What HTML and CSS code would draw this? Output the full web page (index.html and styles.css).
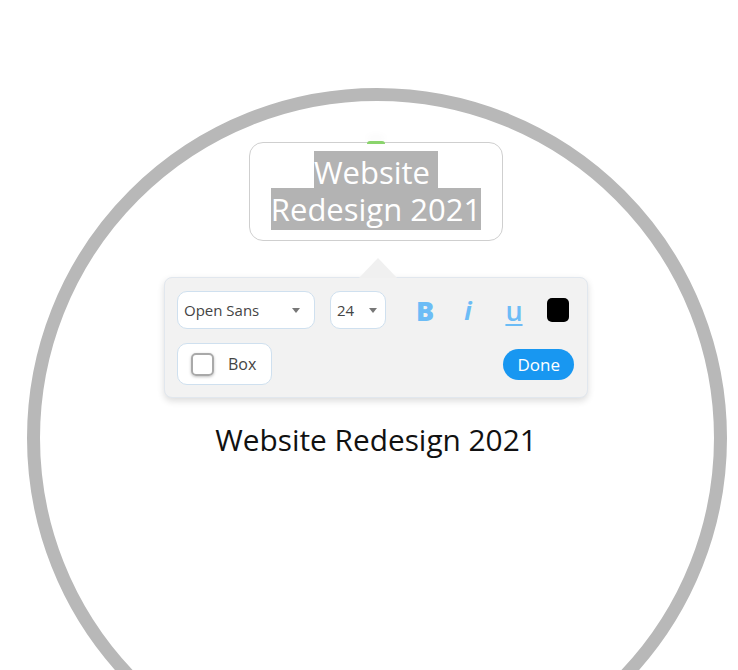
FILE: index.html
```html
<!DOCTYPE html>
<html lang="en">
<head>
    <meta charset="UTF-8">
    <title>Mind Map Editor</title>
    <link rel="stylesheet" href="styles.css">
</head>
<body>
    <div class="stage">
        <div class="ring"></div>

        <div class="content">
            <div class="node-edit">
                <span class="node-dot"></span>
                <p class="node-text"><span class="sel">Website&nbsp;<br>Redesign 2021</span></p>
            </div>

            <div class="toolbar">
                <div class="tool-row">
                    <div class="select font-select">
                        <span>Open Sans</span>
                        <span class="caret"></span>
                    </div>
                    <div class="select size-select">
                        <span>24</span>
                        <span class="caret"></span>
                    </div>
                    <div class="format">
                        <button class="fmt fmt-bold">B</button>
                        <button class="fmt fmt-italic">i</button>
                        <button class="fmt fmt-under">u</button>
                        <span class="swatch"></span>
                    </div>
                </div>
                <div class="tool-row">
                    <label class="box-toggle">
                        <span class="check"></span>
                        <span>Box</span>
                    </label>
                    <button class="done">Done</button>
                </div>
            </div>

            <h1 class="title">Website Redesign 2021</h1>
        </div>
    </div>
</body>
</html>
```

FILE: styles.css
```css
body {
    margin: 0;
    background: white;
    font-family: 'Open Sans', sans-serif;
    color: #333;
}
.stage {
    position: relative;
    height: 670px;
    overflow: hidden;
}
.ring {
    position: absolute;
    left: 27px;
    top: 88px;
    width: 700px;
    height: 700px;
    box-sizing: border-box;
    border: 13px solid #b8b8b8;
    border-radius: 50%;
}
.content {
    position: relative;
    display: flex;
    flex-direction: column;
    align-items: center;
    padding: 142px 0 0 14px;
}

/* node being edited */
.node-edit {
    position: relative;
    width: 254px;
    height: 99px;
    box-sizing: border-box;
    border: 1px solid #cfcfcf;
    border-radius: 14px;
    background: white;
    text-align: center;
}
.node-dot {
    position: absolute;
    left: 117px;
    top: -2px;
    width: 18px;
    height: 3px;
    border-radius: 9px 9px 0 0;
    background: #8ad46c;
    box-shadow: 0 -4px 8px rgba(0, 0, 0, 0.06);
}
.node-text {
    margin: 0;
    padding-top: 11px;
    font-size: 31px;
    line-height: 37px;
    color: white;
}
.sel {background: #b3b3b3;}

/* formatting toolbar */
.toolbar {
    position: relative;
    margin-top: 36px;
    width: 424px;
    box-sizing: border-box;
    padding: 13px 13px 12px 12px;
    background: #f2f2f2;
    border: 1px solid #e1e7ee;
    border-radius: 8px;
    box-shadow: 0 3px 7px rgba(0, 0, 0, 0.14);
}
.toolbar::before {
    content: "";
    position: absolute;
    left: 194px;
    top: -20px;
    border: 19px solid transparent;
    border-top: 0;
    border-bottom: 20px solid #f0f0f0;
}
.tool-row {
    display: flex;
    align-items: center;
}
.tool-row + .tool-row {
    margin-top: 14px;
    justify-content: space-between;
}
.select {
    display: flex;
    align-items: center;
    justify-content: space-between;
    height: 38px;
    box-sizing: border-box;
    padding: 0 8px 0 6px;
    background: white;
    border: 1px solid #cfe0ef;
    border-radius: 10px;
    font-size: 15px;
    color: #444;
}
.font-select {width: 138px; padding-right: 14px;}
.size-select {width: 56px; margin-left: 15px; padding-right: 8px;}
.caret {
    border: 4px solid transparent;
    border-top: 5px solid #777;
    border-bottom: 0;
}
.format {
    display: flex;
    align-items: center;
    margin-left: 30px;
}
.fmt {
    padding: 0;
    border: none;
    background: none;
    font-family: 'Open Sans', sans-serif;
    color: #6cbcf6;
    cursor: pointer;
}
.fmt-bold {font-size: 27px; font-weight: 800; width: 17px;}
.fmt-italic {font-size: 25px; font-style: italic; font-weight: 700; margin-left: 29px; width: 12px;}
.fmt-under {font-size: 27px; font-weight: 600; text-decoration: underline; text-decoration-thickness: 2px; text-underline-offset: 3px; margin-left: 30px; width: 20px;}
.swatch {
    width: 22px;
    height: 24px;
    margin-left: 23px;
    background: black;
    border-radius: 5px;
}
.box-toggle {
    display: flex;
    align-items: center;
    gap: 14px;
    width: 95px;
    height: 42px;
    box-sizing: border-box;
    padding-left: 13px;
    background: white;
    border: 1px solid #cfe0ef;
    border-radius: 10px;
    font-size: 16px;
    color: #444;
}
.check {
    width: 23px;
    height: 23px;
    box-sizing: border-box;
    border: 2px solid #a9a9a9;
    border-radius: 5px;
    box-shadow: 0 1px 3px rgba(0, 0, 0, 0.25);
}
.done {
    height: 31px;
    padding: 0 14px;
    border: none;
    border-radius: 16px;
    background: #1897f1;
    color: white;
    font-family: 'Open Sans', sans-serif;
    font-size: 17px;
    cursor: pointer;
}
.title {
    margin: 23px 0 0;
    font-size: 29.8px;
    font-weight: 400;
    line-height: 38px;
    color: #111;
}
```
